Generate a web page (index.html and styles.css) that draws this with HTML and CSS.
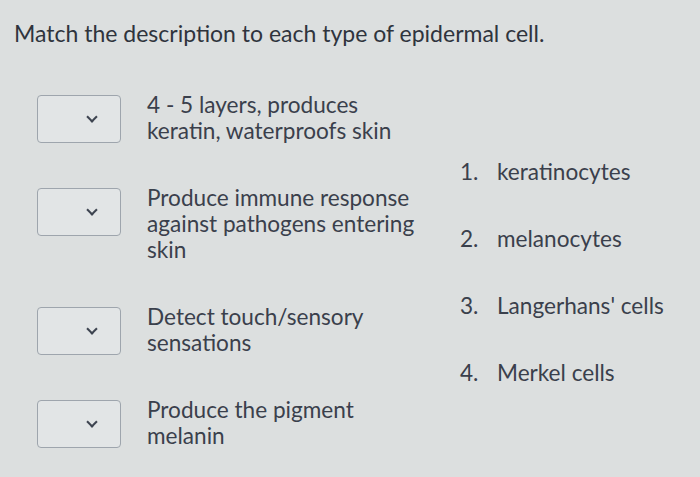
FILE: index.html
```html
<!DOCTYPE html>
<html lang="en">
  <head>
    <meta charset="UTF-8" />
    <title>Matching question</title>
    <link rel="stylesheet" href="styles.css">
  </head>
  <body>
    <div class="question">
      <p class="prompt">Match the description to each type of epidermal cell.</p>

      <div class="match">
        <!-- descriptions with their answer dropdowns -->
        <div class="pairs">
          <div class="pair">
            <div class="select"><span class="chevron"></span></div>
            <div class="desc">4 - 5 layers, produces<br>keratin, waterproofs skin</div>
          </div>
          <div class="pair">
            <div class="select"><span class="chevron"></span></div>
            <div class="desc">Produce immune response<br>against pathogens entering<br>skin</div>
          </div>
          <div class="pair">
            <div class="select"><span class="chevron"></span></div>
            <div class="desc">Detect touch/sensory<br>sensations</div>
          </div>
          <div class="pair">
            <div class="select"><span class="chevron"></span></div>
            <div class="desc">Produce the pigment<br>melanin</div>
          </div>
        </div>

        <!-- answer choices -->
        <ol class="choices">
          <li><span class="num">1.</span>keratinocytes</li>
          <li><span class="num">2.</span>melanocytes</li>
          <li><span class="num">3.</span>Langerhans' cells</li>
          <li><span class="num">4.</span>Merkel cells</li>
        </ol>
      </div>
    </div>
  </body>
</html>
```

FILE: styles.css
```css
body {
  margin: 0;
  background-color: #dcdfdf;
  color: #3a404c;
  font-family: Lato, 'Liberation Sans', sans-serif;
  font-size: 22.6px;
}

.question {
  padding: 20px 14px 0 14px;
}

.prompt {
  margin: 0;
  line-height: 26px;
  color: #2f343d;
  font-size: 23px;
}

.match {
  display: flex;
  margin-top: 49px;
}

/* left column */
.pairs {
  display: flex;
  flex-direction: column;
  gap: 44px;
  width: 423px;
  padding-left: 23px;
  flex-shrink: 0;
}

.pair {
  display: flex;
  align-items: flex-start;
}

.select {
  width: 58px;
  height: 46px;
  padding-right: 24px;
  border: 1px solid #9ea5ad;
  border-radius: 4px;
  background-color: #e2e5e6;
  display: flex;
  align-items: center;
  justify-content: flex-end;
  flex-shrink: 0;
}

.chevron {
  width: 6px;
  height: 6px;
  border-right: 2px solid #3d4450;
  border-bottom: 2px solid #3d4450;
  transform: rotate(45deg);
  margin-top: -4px;
}

.desc {
  margin-left: 26px;
  line-height: 26px;
  margin-top: -3px;
  white-space: nowrap;
}

/* right column */
.choices {
  list-style: none;
  margin: 0;
  padding: 0;
  margin-top: 64px;
  display: flex;
  flex-direction: column;
  gap: 41px;
}

.choices li {
  display: flex;
  line-height: 26px;
  white-space: nowrap;
}

.num {
  width: 37px;
}
```
